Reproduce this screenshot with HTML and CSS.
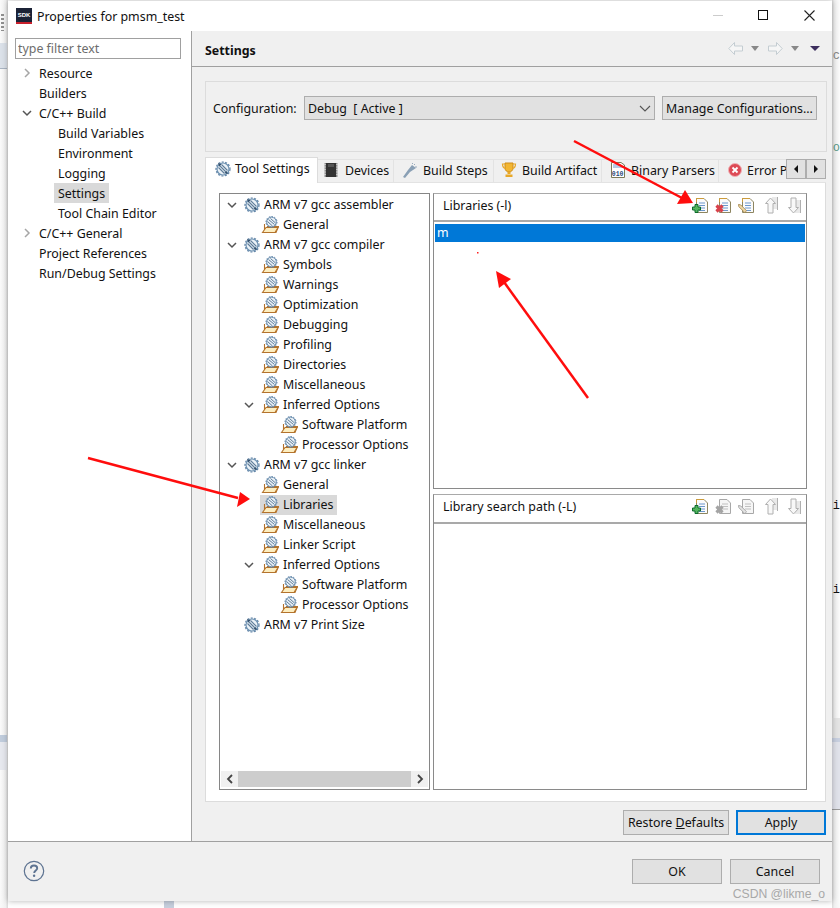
FILE: index.html
```html
<!DOCTYPE html>
<html lang="en">
<head>
<meta charset="utf-8">
<title>Properties for pmsm_test</title>
<link rel="stylesheet" href="styles.css">
</head>
<body>
<svg class="defs" width="0" height="0" aria-hidden="true">
  <defs>
    <symbol id="gear" viewBox="0 0 16 16">
      <circle cx="8" cy="8" r="6" fill="#eaf1f7" stroke="#6f93b3" stroke-width="1.200"/>
      <circle cx="8" cy="8" r="7" fill="none" stroke="#5f83a6" stroke-width="1.200" stroke-dasharray="2 1.500"/>
      <path d="M4.500 4.500l7 7M6.500 3.500l6 6M3.500 6.500l6 6" stroke="#5f7d99" stroke-width="1.100" fill="none"/>
      <path d="M3 2l3.500 1.200-2.300 2.300zM11.500 10l1.500 3.200-3.500-1.200z" fill="#34506c"/>
    </symbol>
    <symbol id="folder" viewBox="0 0 18 18">
      <path d="M3.500 8V16.500H15L17.500 10.500H6.500L3.500 16.500" fill="#fbdf9a" stroke="#b4732c" stroke-width="1.100"/>
      <path d="M1.500 16.500L5 11.500H17L14 16.500Z" fill="#fdeec0" stroke="#b4732c" stroke-width="1.100"/>
      <circle cx="10.500" cy="6" r="4.800" fill="#eaf1f7" stroke="#6f93b3" stroke-width="1"/>
      <circle cx="10.500" cy="6" r="5.500" fill="none" stroke="#5f83a6" stroke-width="1" stroke-dasharray="1.600 1.200"/>
      <path d="M7.500 3.500l6 5M9.500 2.500l5 4.500M6.500 5.500l5 4.500" stroke="#5f7d99" stroke-width="1" fill="none"/>
    </symbol>
    <symbol id="doc" viewBox="0 0 15 15">
      <path d="M2.500 .5H10L13.500 4V14.500H2.500Z" fill="#fbfbfb" stroke="#8d8560" stroke-width="1"/>
      <path d="M2.500 4V.5H10" fill="none" stroke="#cc9c3c" stroke-width="1"/>
      <path d="M5 5h6M5 7.500h6M5 10h6M5 12.500h6" stroke="#6c97cd" stroke-width="1"/>
    </symbol>
    <symbol id="doc-off" viewBox="0 0 15 15">
      <path d="M2.500 .5H10L13.500 4V14.500H2.500Z" fill="#f6f6f6" stroke="#a8a8a8" stroke-width="1"/>
      <path d="M5 5h6M5 7.500h6M5 10h6" stroke="#c0c0c0" stroke-width="1"/>
    </symbol>
    <symbol id="plus" viewBox="0 0 9 9">
      <path d="M3 .5h3v2.500h2.500v3H6v2.500H3V6H.5V3H3z" fill="#53b45d" stroke="#0c6a2c" stroke-width="1"/>
    </symbol>
    <symbol id="cross" viewBox="0 0 9 9">
      <path d="M1.500 1.500L7.500 7.500M7.500 1.500L1.500 7.500" stroke="#d8414a" stroke-width="3.200"/>
    </symbol>
    <symbol id="cross-off" viewBox="0 0 9 9">
      <path d="M1.500 1.500L7.500 7.500M7.500 1.500L1.500 7.500" stroke="#a4a4a4" stroke-width="3.200"/>
    </symbol>
    <symbol id="pencil" viewBox="0 0 10 10">
      <path d="M.5 .5L3 1l6.500 6.500-2 2L1 3z" fill="#f0d9a8" stroke="#a88a50" stroke-width="1"/>
    </symbol>
    <symbol id="pencil-off" viewBox="0 0 10 10">
      <path d="M.5 .5L3 1l6.500 6.500-2 2L1 3z" fill="#e4e4e4" stroke="#a4a4a4" stroke-width="1"/>
    </symbol>
    <symbol id="up" viewBox="0 0 15 17">
      <rect x="9" y="0" width="5" height="12" fill="#e4e4e4" opacity=".8"/>
      <path d="M7.500 1L2.500 6.500H5V16h5V6.500h2.500z" fill="#f8f8f8" stroke="#b0b0b0" stroke-width="1"/>
      <path d="M14.500 0v13" stroke="#b0b0b0" stroke-width="1"/>
    </symbol>
    <symbol id="down" viewBox="0 0 15 17">
      <rect x="9" y="3" width="5" height="13" fill="#e4e4e4" opacity=".8"/>
      <path d="M5 1h5v9.500h2.500L7.500 16 2.500 10.500H5z" fill="#f8f8f8" stroke="#b0b0b0" stroke-width="1"/>
      <path d="M14.500 3v13" stroke="#b0b0b0" stroke-width="1"/>
    </symbol>
    <symbol id="open" viewBox="0 0 10 10"><path d="M1 3l4 4 4-4" fill="none" stroke="#555" stroke-width="1.500"/></symbol>
    <symbol id="closed" viewBox="0 0 10 10"><path d="M3 1l4 4-4 4" fill="none" stroke="#a6a6a6" stroke-width="1.500"/></symbol>
  </defs>
</svg>

<div class="backdrop">
  <span class="bg-left"></span>
  <span class="bg-right"></span>
  <span class="bg-strip bg-dots"></span>
  <span class="bg-strip bg-strip-a"></span>
  <span class="bg-strip bg-strip-b"></span>
  <span class="bg-strip bg-strip-c"></span>
  <span class="bg-strip bg-strip-d"></span>
  <span class="bg-char bg-char-a">i</span>
  <span class="bg-char bg-char-b">i</span>
  <span class="bg-char bg-char-c">o</span>
  <span class="bg-char bg-char-d">c</span>
</div>

<main class="dialog">
  <header class="titlebar">
    <div class="app-logo"><span>SDK</span></div>
    <h1 class="title">Properties for pmsm_test</h1>
    <div class="win-controls">
      <span class="win-min"></span>
      <span class="win-max"></span>
      <svg class="win-close" width="11" height="11" viewBox="0 0 11 11"><path d="M.5 .5l10 10M10.500 .5l-10 10" stroke="#222" stroke-width="1.100"/></svg>
    </div>
  </header>

  <div class="body">
    <aside class="sidebar">
      <input class="filter" type="text" placeholder="type filter text">
      <ul class="nav">
        <li class="nav-row"><svg class="tw"><use href="#closed"/></svg>Resource</li>
        <li class="nav-row"><span class="tw"></span>Builders</li>
        <li class="nav-row"><svg class="tw"><use href="#open"/></svg>C/C++ Build</li>
        <li class="nav-row nav-child">Build Variables</li>
        <li class="nav-row nav-child">Environment</li>
        <li class="nav-row nav-child">Logging</li>
        <li class="nav-row nav-child"><span class="nav-sel">Settings</span></li>
        <li class="nav-row nav-child">Tool Chain Editor</li>
        <li class="nav-row"><svg class="tw"><use href="#closed"/></svg>C/C++ General</li>
        <li class="nav-row"><span class="tw"></span>Project References</li>
        <li class="nav-row"><span class="tw"></span>Run/Debug Settings</li>
      </ul>
    </aside>

    <section class="content">
      <div class="page-head">
        <h2 class="page-title">Settings</h2>
        <div class="history">
          <svg width="15" height="13" viewBox="0 0 15 13"><path d="M6.500 .5L.8 6.500l5.700 6V9h8V4h-8z" fill="#f6f6f6" stroke="#c4cdd2"/></svg>
          <i class="drop"></i>
          <svg class="hist-next" width="15" height="13" viewBox="0 0 15 13"><path d="M8.500 .5l5.700 6-5.700 6V9h-8V4h8z" fill="#f6f6f6" stroke="#c4cdd2"/></svg>
          <i class="drop"></i>
          <i class="drop drop-dark"></i>
        </div>
      </div>

      <div class="page-body">
        <div class="config">
          <label class="config-label">Configuration:</label>
          <div class="select">
            <span>Debug&nbsp; [ Active ]</span>
            <svg width="12" height="7" viewBox="0 0 12 7"><path d="M1 1l5 5 5-5" fill="none" stroke="#555" stroke-width="1.100"/></svg>
          </div>
          <button class="btn btn-manage">Manage Configurations...</button>
        </div>

        <div class="tabs">
          <div class="tab tab-active">
            <svg class="i16"><use href="#gear"/></svg>Tool Settings
          </div>
          <div class="tab tab-devices">
            <svg class="i16" viewBox="0 0 16 16"><rect x="1.500" y="1" width="13" height="14" fill="#8a8a8a"/><rect x="3" y="1" width="10" height="14" fill="#333"/><path d="M1 2.500h14M1 5h14M1 7.500h14M1 10h14M1 12.500h14" stroke="#ddd" stroke-width=".7" stroke-dasharray="2 10 2"/><rect x="5" y="2" width="6" height="3" fill="#555"/></svg>Devices
          </div>
          <div class="tab tab-steps">
            <svg class="i16" viewBox="0 0 16 16"><path d="M1 15l5-7 2 2-5 6zM6 8l4-5 4 3-6 4z" fill="#8aa0b5"/><path d="M10 1l1 1M13 2l-1 1M15 5l-2 0" stroke="#9ab" stroke-width="1"/></svg>Build Steps
          </div>
          <div class="tab tab-artifact">
            <svg class="i16" viewBox="0 0 16 16"><path d="M4 1h8v5c0 2.500-2 4-4 4s-4-1.500-4-4z" fill="#f2b632" stroke="#d08c18"/><path d="M4 2H1.500c0 3 1 4 3 4.500M12 2h2.500c0 3-1 4-3 4.500" fill="none" stroke="#e8a828" stroke-width="1.200"/><path d="M6.500 10h3v2h-3zM4.500 12.500h7V15h-7z" fill="#e8a828"/></svg>Build Artifact
          </div>
          <div class="tab tab-binary">
            <svg class="i16" viewBox="0 0 16 16"><path d="M1.500 .5H11L14.500 3V15.500H1.500Z" fill="#fff" stroke="#7d7a58"/><path d="M3 3h8M3 5h10" stroke="#6c97cd"/><text x="1.800" y="14" class="bin-text">010</text></svg>Binary Parsers
          </div>
          <div class="tab tab-clipped">
            <svg class="i16" viewBox="0 0 16 16"><circle cx="8" cy="8" r="6.500" fill="#dd4a55" stroke="#f0b0b4"/><path d="M5.500 5.500l5 5M10.500 5.500l-5 5" stroke="#fff" stroke-width="1.800"/></svg><span class="clip-text">Error Parsers</span>
          </div>
          <div class="tab-scroll">
            <button class="scroll-btn"><i class="tri-l"></i></button>
            <button class="scroll-btn"><i class="tri-r"></i></button>
          </div>
        </div>

        <div class="tab-panel">
          <div class="panes">
            <div class="tree-box">
              <ul class="tree">
                <li class="tree-row"><svg class="tw2"><use href="#open"/></svg><svg class="i16"><use href="#gear"/></svg>ARM v7 gcc assembler</li>
                <li class="tree-row d1"><svg class="ifold"><use href="#folder"/></svg>General</li>
                <li class="tree-row"><svg class="tw2"><use href="#open"/></svg><svg class="i16"><use href="#gear"/></svg>ARM v7 gcc compiler</li>
                <li class="tree-row d1"><svg class="ifold"><use href="#folder"/></svg>Symbols</li>
                <li class="tree-row d1"><svg class="ifold"><use href="#folder"/></svg>Warnings</li>
                <li class="tree-row d1"><svg class="ifold"><use href="#folder"/></svg>Optimization</li>
                <li class="tree-row d1"><svg class="ifold"><use href="#folder"/></svg>Debugging</li>
                <li class="tree-row d1"><svg class="ifold"><use href="#folder"/></svg>Profiling</li>
                <li class="tree-row d1"><svg class="ifold"><use href="#folder"/></svg>Directories</li>
                <li class="tree-row d1"><svg class="ifold"><use href="#folder"/></svg>Miscellaneous</li>
                <li class="tree-row d1t"><svg class="tw2"><use href="#open"/></svg><svg class="ifold"><use href="#folder"/></svg>Inferred Options</li>
                <li class="tree-row d2"><svg class="ifold"><use href="#folder"/></svg>Software Platform</li>
                <li class="tree-row d2"><svg class="ifold"><use href="#folder"/></svg>Processor Options</li>
                <li class="tree-row"><svg class="tw2"><use href="#open"/></svg><svg class="i16"><use href="#gear"/></svg>ARM v7 gcc linker</li>
                <li class="tree-row d1"><svg class="ifold"><use href="#folder"/></svg>General</li>
                <li class="tree-row d1 tree-sel"><svg class="ifold"><use href="#folder"/></svg>Libraries</li>
                <li class="tree-row d1"><svg class="ifold"><use href="#folder"/></svg>Miscellaneous</li>
                <li class="tree-row d1"><svg class="ifold"><use href="#folder"/></svg>Linker Script</li>
                <li class="tree-row d1t"><svg class="tw2"><use href="#open"/></svg><svg class="ifold"><use href="#folder"/></svg>Inferred Options</li>
                <li class="tree-row d2"><svg class="ifold"><use href="#folder"/></svg>Software Platform</li>
                <li class="tree-row d2"><svg class="ifold"><use href="#folder"/></svg>Processor Options</li>
                <li class="tree-row tree-root-leaf"><svg class="i16"><use href="#gear"/></svg>ARM v7 Print Size</li>
              </ul>
              <div class="hscroll">
                <span class="hs-arrow"><svg width="8" height="10" viewBox="0 0 8 10"><path d="M6 1L2 5l4 4" fill="none" stroke="#444" stroke-width="1.800"/></svg></span>
                <span class="hs-thumb"></span>
                <span class="hs-arrow"><svg width="8" height="10" viewBox="0 0 8 10"><path d="M2 1l4 4-4 4" fill="none" stroke="#444" stroke-width="1.800"/></svg></span>
              </div>
            </div>

            <div class="lists">
              <div class="list-group list-group-a">
                <div class="list-head">
                  <span>Libraries (-l)</span>
                  <div class="tools">
                    <span class="tool"><svg class="t15"><use href="#doc"/></svg><svg class="badge-ic"><use href="#plus"/></svg></span>
                    <span class="tool"><svg class="t15"><use href="#doc"/></svg><svg class="badge-ic"><use href="#cross"/></svg></span>
                    <span class="tool"><svg class="t15"><use href="#doc"/></svg><svg class="badge-ic"><use href="#pencil"/></svg></span>
                    <svg class="tool-arrow"><use href="#up"/></svg>
                    <svg class="tool-arrow"><use href="#down"/></svg>
                  </div>
                </div>
                <div class="list-body">
                  <div class="list-sel">m</div>
                </div>
              </div>
              <div class="list-group list-group-b">
                <div class="list-head">
                  <span>Library search path (-L)</span>
                  <div class="tools">
                    <span class="tool"><svg class="t15"><use href="#doc"/></svg><svg class="badge-ic"><use href="#plus"/></svg></span>
                    <span class="tool"><svg class="t15"><use href="#doc-off"/></svg><svg class="badge-ic"><use href="#cross-off"/></svg></span>
                    <span class="tool"><svg class="t15"><use href="#doc-off"/></svg><svg class="badge-ic"><use href="#pencil-off"/></svg></span>
                    <svg class="tool-arrow"><use href="#up"/></svg>
                    <svg class="tool-arrow"><use href="#down"/></svg>
                  </div>
                </div>
                <div class="list-body"></div>
              </div>
            </div>
          </div>
        </div>

        <div class="page-actions">
          <button class="btn btn-restore">Restore <u>D</u>efaults</button>
          <button class="btn btn-apply">Apply</button>
        </div>
      </div>
    </section>
  </div>

  <footer class="footer">
    <svg class="help" width="22" height="22" viewBox="0 0 22 22">
      <circle cx="11" cy="11" r="9.700" fill="none" stroke="#5d7391" stroke-width="1.200"/>
      <path d="M7.800 8.500c0-2 1.500-3 3.200-3s3.200 1 3.200 2.800c0 2.200-3 2.300-3 4.700" fill="none" stroke="#5d7391" stroke-width="1.900"/>
      <circle cx="11.100" cy="15.800" r="1.200" fill="#5d7391"/>
    </svg>
    <div class="footer-btns">
      <button class="btn btn-foot">OK</button>
      <button class="btn btn-foot">Cancel</button>
    </div>
  </footer>
</main>

<div class="watermark">CSDN @likme_o</div>

<svg class="annot" width="840" height="908" viewBox="0 0 840 908" aria-hidden="true">
  <path d="M574 141L682 198" stroke="#ff0d0d" stroke-width="2.500"/>
  <path d="M693 203L677 204 685 190Z" fill="#ff0d0d"/>
  <path d="M588 398L504 282" stroke="#ff0d0d" stroke-width="2.500"/>
  <path d="M496 271L511 279 499 288Z" fill="#ff0d0d"/>
  <path d="M88 458L238 498" stroke="#ff0d0d" stroke-width="2.500"/>
  <path d="M250 499L237 507 240 492Z" fill="#ff0d0d"/>
  <rect x="477" y="252" width="1.500" height="1.500" fill="#ff2020"/>
</svg>
</body>
</html>
```

FILE: styles.css
```css
* { box-sizing: border-box; }
html, body { margin: 0; padding: 0; }
body {
  position: relative;
  width: 840px;
  height: 908px;
  overflow: hidden;
  background: #fff;
  font-family: "Noto Sans", "Open Sans", sans-serif;
  font-size: 12.4px;
  color: #111;
}
.defs { position: absolute; }
ul { list-style: none; margin: 0; padding: 0; }

.backdrop { position: absolute; inset: 0; background: #fff; }
.bg-left, .bg-right { position: absolute; top: 0; bottom: 0; width: 8px; display: block; }
.bg-left { left: 0; background: linear-gradient(to right, #fafafa, #f1f1f1 70%, #d8d8d8); }
.bg-right { right: 0; background: linear-gradient(to left, #fbfbfb, #f0f0f0 70%, #dadada); }
.bg-strip { position: absolute; display: block; }
.bg-dots { left: 1px; top: 14px; width: 3px; height: 17px; background: repeating-linear-gradient(to bottom, #8f8f8f 0 2px, transparent 2px 4px); }
.bg-strip-a { left: 0; top: 43px; width: 7px; height: 26px; background: #dbe1e9; border-bottom: 1px solid #a9b4c2; }
.bg-strip-b { left: 0; top: 735px; width: 7px; height: 35px; background: linear-gradient(to bottom, #c0ccdc 0 7px, #e6e8ee 7px); }
.bg-strip-c { right: 0; top: 718px; width: 8px; height: 92px; background: linear-gradient(to bottom, #e4e4e4 0 20px, #c8d0e0 20px 24px, #e0e2ea 24px); border-bottom: 1px solid #9a9a9a; }
.bg-strip-d { left: 164px; top: 901px; width: 10px; height: 7px; background: #c6cfdd; }
.bg-char { position: absolute; right: 0; font-family: "Liberation Mono", monospace; font-size: 12px; line-height: 16px; }
.bg-char-a { top: 498px; }
.bg-char-b { top: 582px; }
.bg-char-c { top: 140px; color: #5a9a88; }
.bg-char-d { top: 48px; color: #888; }

.dialog {
  position: absolute;
  left: 8px;
  top: 1px;
  width: 824px;
  height: 900px;
  background: #f0f0f0;
  display: flex;
  flex-direction: column;
  box-shadow: 0 0 6px rgba(0,0,0,.3);
}

.titlebar {
  height: 30px;
  background: #fff;
  display: flex;
  align-items: center;
  padding-left: 8px;
  flex: none;
}
.app-logo {
  width: 16px;
  height: 16px;
  background: #1b2236;
  border-bottom: 2px solid #c8202c;
  display: flex;
  align-items: center;
  justify-content: center;
  margin-right: 5px;
}
.app-logo span { color: #fff; font: bold 6px "Liberation Sans", sans-serif; }
.title { margin: 0; font-size: 12.4px; font-weight: 400; color: #111; }
.win-controls { margin-left: auto; display: flex; align-items: center; padding: 0 17px 2px 0; }
.win-min { width: 10px; height: 1px; background: #ccc; margin-right: 35px; }
.win-max { width: 10px; height: 10px; border: 1px solid #111; margin-right: 36px; }
.win-close { display: block; }

.body { flex: 1; display: flex; min-height: 0; }
.sidebar {
  width: 184px;
  flex: none;
  background: #fff;
  border-right: 1px solid #a0a0a0;
  padding: 7px 10px 0 7px;
}
.filter {
  display: block;
  width: 166px;
  height: 21px;
  border: 1px solid #a0a0a0;
  padding: 0 2px;
  font: 12.4px "Noto Sans", sans-serif;
  outline: none;
}
.filter::placeholder { color: #6d6d6d; opacity: 1; }
.nav { margin-top: 4px; }
.nav-row { height: 20px; line-height: 19px; display: flex; align-items: center; white-space: nowrap; }
.tw { width: 10px; height: 10px; margin: 0 7px 0 7px; flex: none; }
.nav-child { padding-left: 43px; }
.nav-sel { background: #d9d9d9; padding: 0 4px; margin-left: -4px; line-height: 22px; height: 20px; }

.content { flex: 1; display: flex; flex-direction: column; min-width: 0; }
.page-head {
  height: 36px;
  flex: none;
  border-bottom: 1px solid #a0a0a0;
  display: flex;
  align-items: center;
  padding: 0 12px 0 13px;
}
.page-title { margin: 0; padding-top: 3px; font-size: 12.4px; font-weight: 700; color: #111; }
.history { margin-left: auto; display: flex; align-items: center; gap: 8px; }
.hist-next { margin-left: 1px; }
.drop { display: block; width: 0; height: 0; border: 4px solid transparent; border-top: 5px solid #888; border-bottom: 0; }
.drop-dark { border-top-color: #3c2e5e; border-left-width: 5px; border-right-width: 5px; margin-left: 3px; }

.page-body { flex: 1; padding: 14px 5px 0 13px; display: flex; flex-direction: column; min-height: 0; }
.config {
  height: 71px;
  flex: none;
  border: 1px solid #dcdcdc;
  display: flex;
  align-items: flex-start;
  padding: 14px 9px 0 7px;
}
.config-label { line-height: 26px; width: 91px; flex: none; }
.select {
  width: 351px;
  height: 24px;
  background: #e1e1e1;
  border: 1px solid #adadad;
  display: flex;
  align-items: center;
  justify-content: space-between;
  padding: 0 3px 0 3px;
  margin-right: 7px;
}
.btn {
  font: 12.4px "Noto Sans", sans-serif;
  color: #111;
  background: #e1e1e1;
  border: 1px solid #adadad;
  padding: 0;
  white-space: nowrap;
}
.btn-manage { width: 155px; height: 24px; }

.tabs { display: flex; height: 26px; margin: 5px 1px 0 0; flex: none; align-items: flex-start; position: relative; overflow: hidden; }
.tab {
  height: 24px;
  margin-top: 2px;
  background: #f0f0f0;
  border: 1px solid #e3e3e3;
  border-left: 0;
  display: flex;
  align-items: center;
  gap: 5px;
  padding: 0 0 2px 7px;
  white-space: nowrap;
  flex: none;
}
.tab-active { width: 113px; height: 26px; margin-top: 0; align-items: flex-start; line-height: 20px; background: #fff; border: 1px solid #dcdcdc; border-bottom: 0; padding: 1px 0 0 9px; gap: 4px; position: relative; z-index: 1; }
.tab-active .i16 { margin-top: 2px; }
.tab-devices { width: 76px; padding-left: 5px; gap: 6px; }
.tab-steps { width: 100px; padding-left: 8px; }
.tab-artifact { width: 108px; }
.tab-binary { width: 117px; padding-left: 8px; }
.tab-clipped { flex: 1; border-right: 0; min-width: 0; overflow: hidden; padding-left: 8px; gap: 4px; }
.clip-text { display: block; }
.i16 { width: 16px; height: 16px; flex: none; display: block; }
.bin-text { font: bold 6.5px "Liberation Mono", monospace; fill: #2a4a7a; }
.tab-scroll { position: absolute; right: 0; top: 2px; display: flex; z-index: 2; }
.scroll-btn {
  width: 20px;
  height: 20px;
  padding: 0;
  background: #e1e1e1;
  border: 1px solid #adadad;
  display: flex;
  align-items: center;
  justify-content: center;
}
.tri-l, .tri-r { display: block; width: 0; height: 0; border: 4px solid transparent; }
.tri-l { border-right: 4px solid #111; border-left: 0; }
.tri-r { border-left: 4px solid #111; border-right: 0; }

.tab-panel {
  height: 620px;
  margin: -1px 1px 0 0;
  background: #fff;
  border: 1px solid #dcdcdc;
  padding: 10px 18px 11px 13px;
  flex: none;
}
.panes { display: flex; gap: 3px; height: 100%; }
.tree-box {
  width: 211px;
  flex: none;
  border: 1px solid #868686;
  display: flex;
  flex-direction: column;
  min-height: 0;
}
.tree { flex: 1; padding-top: 1px; }
.tree-row { height: 20px; display: flex; align-items: flex-start; line-height: 20px; white-space: nowrap; padding-left: 7px; }
.tree-row svg { align-self: center; }
.tw2 { width: 10px; height: 10px; margin-right: 7px; flex: none; }
.tree-row > .i16 { margin-right: 4px; }
.ifold { width: 18px; height: 18px; margin-right: 4px; flex: none; }
.d1 { padding-left: 41px; }
.d1t { padding-left: 24px; }
.d2 { padding-left: 60px; }
.tree-sel { margin-left: 40px; padding-left: 1px; background: #d9d9d9; width: 77px; }
.tree-root-leaf { padding-left: 24px; }
.hscroll { height: 16px; flex: none; display: flex; background: #f0f0f0; margin: 0 1px 2px 1px; }
.hs-arrow { width: 17px; flex: none; display: flex; align-items: center; justify-content: center; }
.hs-thumb { flex: 1; background: #cdcdcd; }

.lists { flex: 1; min-width: 0; display: flex; flex-direction: column; gap: 5px; }
.list-group { display: flex; flex-direction: column; border: 1px solid #8a8a8a; border-top-color: #a9a9a9; }
.list-group-a { height: 296px; }
.list-group-b { flex: 1; }
.list-head {
  height: 28px;
  flex: none;
  display: flex;
  align-items: center;
  padding: 0 5px 4px 9px;
  border-bottom: 2px solid #a9a9a9;
}
.list-group-b .list-head { height: 29px; padding-bottom: 5px; }
.tools { margin-left: auto; display: flex; align-items: center; gap: 8px; }
.tool { position: relative; width: 15px; height: 15px; display: block; }
.t15 { width: 15px; height: 15px; display: block; }
.badge-ic { position: absolute; left: -2px; bottom: 0; width: 9px; height: 9px; }
.tool-arrow { width: 15px; height: 17px; display: block; }
.list-body { flex: 1; background: #fff; padding: 2px 1px 1px; }
.list-sel { height: 18px; background: #0078d7; color: #fff; padding-left: 2px; line-height: 18px; }

.page-actions { display: flex; justify-content: flex-end; gap: 7px; padding: 8px 1px 0 0; }
.btn-restore { width: 106px; height: 25px; }
.btn-apply { width: 90px; height: 25px; border: 2px solid #0078d7; }

.footer {
  height: 60px;
  flex: none;
  border-top: 1px solid #a0a0a0;
  background: #f0f0f0;
  display: flex;
  align-items: center;
  padding: 0 12px 0 15px;
}
.help { margin-top: -2px; }
.footer-btns { margin-left: auto; display: flex; gap: 8px; }
.btn-foot { width: 90px; height: 25px; }

.watermark {
  position: absolute;
  right: 15px;
  top: 887px;
  font: 12.2px "Liberation Sans", sans-serif;
  color: #a8a8a8;
}
.annot { position: absolute; left: 0; top: 0; pointer-events: none; }
```
